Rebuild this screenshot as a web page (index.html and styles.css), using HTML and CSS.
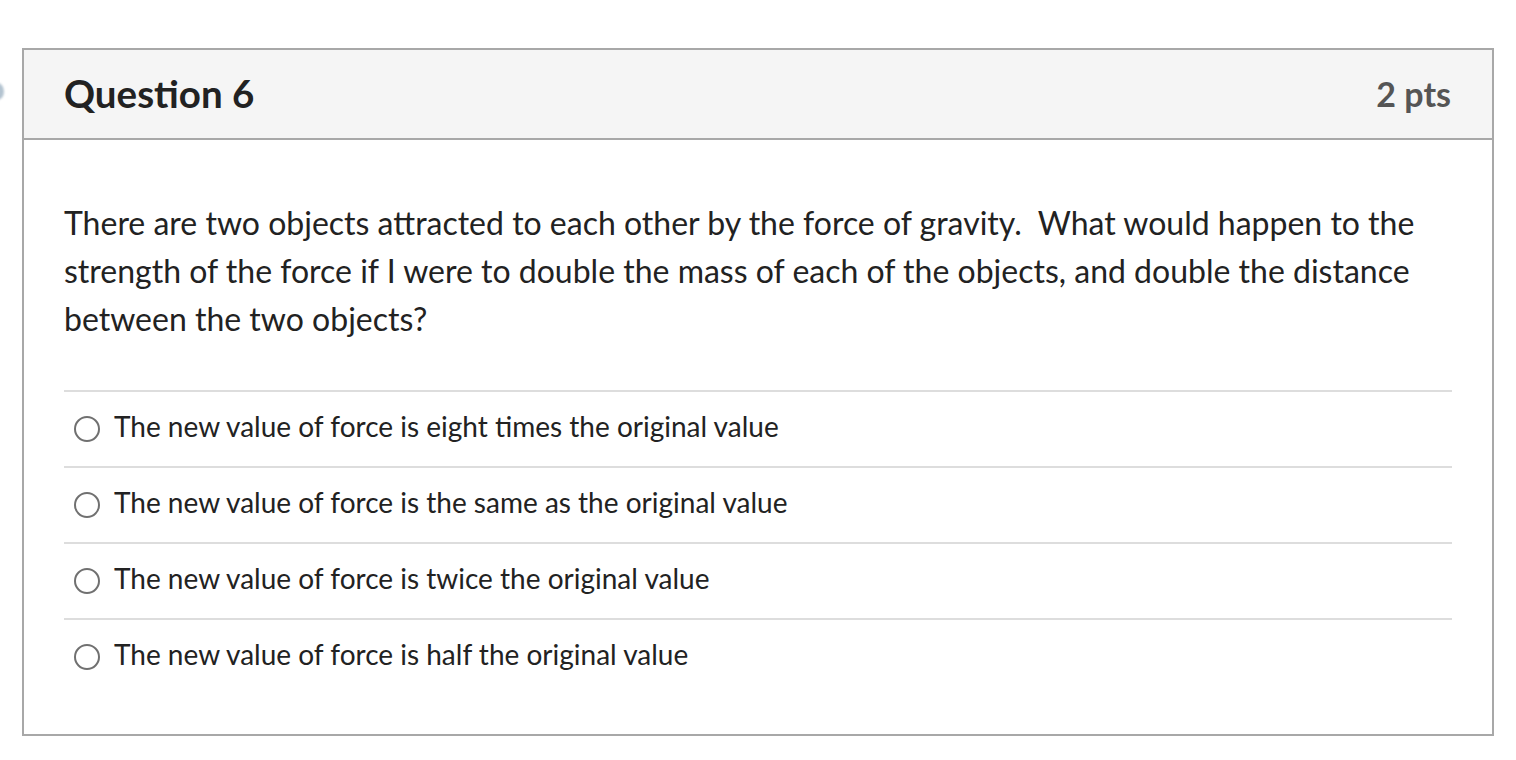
FILE: index.html
```html
<!DOCTYPE html>
<html>
<head>
<meta charset="utf-8">
<link rel="stylesheet" href="styles.css">
</head>
<body>
<div class="page">
  <span class="flag"></span>
  <div class="question">
    <div class="q-header">
      <h2 class="q-title">Question 6</h2>
      <span class="q-points">2 pts</span>
    </div>
    <div class="q-body">
      <p class="q-text">There are two objects attracted to each other by the force of gravity.&nbsp; What would happen to the strength of the force if I were to double the mass of each of the objects, and double the distance between the two objects?</p>
      <div class="answers">
        <label class="answer"><span class="radio"></span><span class="answer-text">The new value of force is eight times the original value</span></label>
        <label class="answer"><span class="radio"></span><span class="answer-text">The new value of force is the same as the original value</span></label>
        <label class="answer"><span class="radio"></span><span class="answer-text">The new value of force is twice the original value</span></label>
        <label class="answer"><span class="radio"></span><span class="answer-text">The new value of force is half the original value</span></label>
      </div>
    </div>
  </div>
</div>
</body>
</html>
```
FILE: styles.css
```css
html, body {
  margin: 0;
  padding: 0;
  background: #ffffff;
}
body {
  font-family: Lato, "Open Sans", sans-serif;
  color: #222222;
}
.page {
  position: relative;
  padding: 48px 0 0 22px;
  width: 1472px;
}
.flag {
  position: absolute;
  left: -9px;
  top: 83px;
  width: 13px;
  height: 17px;
  border-radius: 50%;
  background: #b3c3d0;
  filter: blur(1px);
}
.question {
  border: 2px solid #a8a8a8;
  box-sizing: border-box;
  width: 1472px;
  height: 688px;
}
.q-header {
  height: 88px;
  background: #f5f5f5;
  border-bottom: 2px solid #a8a8a8;
  display: flex;
  align-items: center;
  justify-content: space-between;
  padding: 0 41px 0 40px;
}
.q-title {
  margin: 0 0 2px 0;
  font-size: 38.5px;
  font-weight: 700;
  color: #222222;
}
.q-points {
  font-size: 34px;
  font-weight: 700;
  color: #555555;
  margin-bottom: 2px;
}
.q-body {
  padding: 59px 40px 0 40px;
}
.q-text {
  margin: 0;
  font-size: 32px;
  line-height: 48px;
  color: #222222;
}
.answers {
  margin-top: 47px;
}
.answer {
  display: flex;
  align-items: center;
  height: 74px;
  border-top: 2px solid #dddddd;
}
.radio {
  width: 22px;
  height: 22px;
  border: 2px solid #707070;
  border-radius: 50%;
  margin: 0 14px 0 10px;
  flex: none;
}
.answer-text {
  font-size: 28px;
  color: #222222;
  padding-bottom: 6px;
}
```
